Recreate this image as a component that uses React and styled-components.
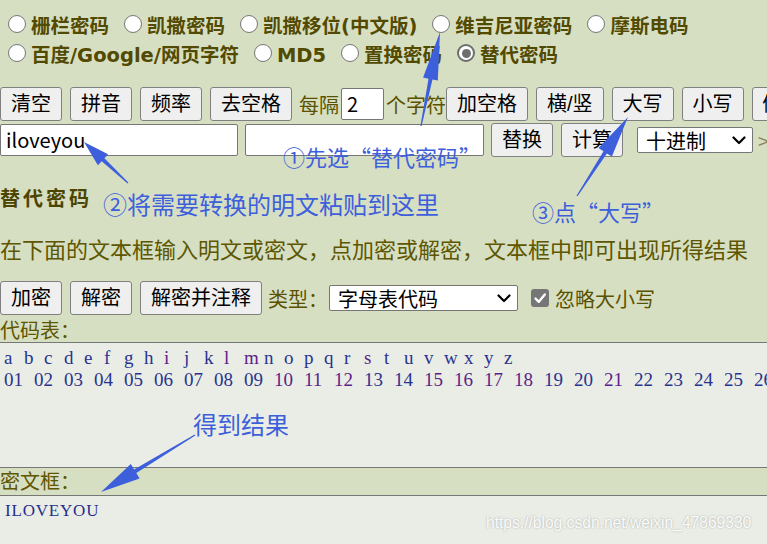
import React from "react";
import styled, { createGlobalStyle } from "styled-components";

const FONT = `"Noto Sans CJK SC", "Noto Sans", sans-serif`;
const OLIVE = "#5a5200";
const GREEN = "#d7dfc3";
const PALE = "#eaede6";
const BLUE = "#3d5fdb";

const GlobalStyle = createGlobalStyle`
  html, body { margin: 0; padding: 0; }
  body {
    width: 767px;
    height: 544px;
    overflow: hidden;
    background: ${PALE};
    font-family: ${FONT};
  }
`;

const Page = styled.div`
  position: relative;
  width: 767px;
  height: 544px;
  overflow: hidden;
  background: ${PALE};
`;

const TopPanel = styled.div`
  background: ${GREEN};
  height: 342px;
  box-sizing: border-box;
  padding-top: 12px;
  color: ${OLIVE};
  font-size: 20px;
`;

const RadioRow = styled.div`
  display: flex;
  align-items: center;
  height: 29px;
  padding-left: 8px;
  white-space: nowrap;
`;

const RadioItem = styled.label`
  display: flex;
  align-items: center;
  flex: none;
  margin-right: 15px;
  font-family: "DejaVu Sans", "Noto Sans CJK SC", sans-serif;
  font-weight: bold;
  font-size: 19.5px;
  line-height: 29px;
  color: #524a00;
`;

const RadioDot = styled.span`
  flex: none;
  width: 18px;
  height: 18px;
  box-sizing: border-box;
  border-radius: 50%;
  border: ${(p) => (p.$checked ? "2px solid #6e6e6e" : "1px solid #767676")};
  background: #fff;
  margin-right: 5px;
  margin-bottom: 5px;
  display: flex;
  align-items: center;
  justify-content: center;
  &::after {
    content: "";
    width: 9px;
    height: 9px;
    border-radius: 50%;
    background: ${(p) => (p.$checked ? "#6e6e6e" : "transparent")};
  }
`;

const Toolbar = styled.div`
  display: flex;
  align-items: center;
  height: 34px;
  margin-top: ${(p) => p.$mt}px;
  white-space: nowrap;
`;

const Button = styled.button`
  flex: none;
  height: 34px;
  box-sizing: border-box;
  padding: 0 10px;
  margin: 0 ${(p) => p.$mr ?? 8}px 0 0;
  background: #efefef;
  border: 1px solid #808080;
  border-radius: 3px;
  font-family: "Liberation Sans", "Noto Sans CJK SC", sans-serif;
  font-size: 20px;
  line-height: 1;
  color: #000;
`;

const TextInput = styled.div`
  flex: none;
  width: ${(p) => p.$w}px;
  height: 32px;
  box-sizing: border-box;
  margin-right: ${(p) => p.$mr ?? 0}px;
  padding: 0 5px;
  background: #fff;
  border: 1px solid #767676;
  border-radius: 2px;
  font-size: 20px;
  line-height: 30px;
  color: #000;
`;

const Label = styled.span`
  flex: none;
  margin-right: ${(p) => p.$mr ?? 0}px;
  font-size: 20px;
  color: ${(p) => p.$color || OLIVE};
`;

const Select = styled.div`
  flex: none;
  width: ${(p) => p.$w}px;
  height: 26px;
  box-sizing: border-box;
  margin-right: ${(p) => p.$mr ?? 0}px;
  padding: 0 6px 0 8px;
  display: flex;
  align-items: center;
  justify-content: space-between;
  background: #fff;
  border: 1px solid #767676;
  border-radius: 2px;
  font-size: 20px;
  color: #000;
`;

const Checkbox = styled.span`
  flex: none;
  width: 18px;
  height: 18px;
  margin-right: 6px;
  border-radius: 3px;
  background: #767676;
  display: flex;
  align-items: center;
  justify-content: center;
`;

const Title = styled.div`
  margin-top: 26px;
  line-height: 30px;
  font-size: 20px;
  font-weight: bold;
  letter-spacing: 3px;
  color: #4c4500;
`;

const Desc = styled.div`
  margin-top: 20px;
  line-height: 30px;
  font-size: 22px;
  color: #5e5600;
  white-space: nowrap;
`;

const TableLabel = styled.div`
  margin-top: 3px;
  line-height: 24px;
  font-size: 20px;
  color: #5e5600;
`;

const CodeBox = styled.div`
  height: 125px;
  box-sizing: border-box;
  border-top: 1px solid #777;
  padding: 4px 0 0 4px;
  font-family: "Liberation Serif", serif;
  font-size: 19px;
  overflow: hidden;
`;

const CodeRow = styled.div`
  display: flex;
  height: 22px;
  line-height: 22px;
  white-space: nowrap;
`;

const Cell = styled.span`
  flex: none;
  width: ${(p) => p.$w}px;
  color: ${(p) => (p.$purple ? "#5b1f88" : "#29338f")};
`;

const Strip = styled.div`
  height: 29px;
  box-sizing: border-box;
  border-top: 1px solid #777;
  border-bottom: 1px solid #777;
  background: ${GREEN};
  line-height: 26px;
  font-size: 20px;
  color: #5e5600;
`;

const Output = styled.div`
  padding: 4px 0 0 5px;
  line-height: 22px;
  font-family: "Liberation Serif", serif;
  font-size: 17px;
  letter-spacing: 0.8px;
  color: #282c8c;
`;

const Watermark = styled.div`
  position: absolute;
  left: 486px;
  top: 514px;
  font-family: "Liberation Sans", Arial, sans-serif;
  font-size: 15.6px;
  color: rgba(255, 255, 255, 0.95);
  text-shadow: 0 0 2px rgba(0, 0, 0, 0.3);
  white-space: nowrap;
`;

const Note = styled.div`
  position: absolute;
  left: ${(p) => p.$x}px;
  top: ${(p) => p.$y}px;
  font-size: ${(p) => p.$size}px;
  line-height: 1;
  color: ${BLUE};
  white-space: nowrap;
`;

const Overlay = styled.svg`
  position: absolute;
  left: 0;
  top: 0;
  width: 767px;
  height: 544px;
  pointer-events: none;
`;

function arrowPoints([x0, y0], [x1, y1], headLen, headHalf, tailHalf, neckHalf) {
  const dx = x1 - x0;
  const dy = y1 - y0;
  const len = Math.hypot(dx, dy);
  const ux = dx / len;
  const uy = dy / len;
  const nx = -uy;
  const ny = ux;
  const bx = x1 - ux * headLen;
  const by = y1 - uy * headLen;
  const pts = [
    [x0 + nx * tailHalf, y0 + ny * tailHalf],
    [bx + nx * neckHalf, by + ny * neckHalf],
    [bx + nx * headHalf, by + ny * headHalf],
    [x1, y1],
    [bx - nx * headHalf, by - ny * headHalf],
    [bx - nx * neckHalf, by - ny * neckHalf],
    [x0 - nx * tailHalf, y0 - ny * tailHalf],
  ];
  return pts.map((p) => p.map((v) => v.toFixed(1)).join(",")).join(" ");
}

const Chevron = () => (
  <svg width="14" height="9" viewBox="0 0 14 9">
    <polyline points="1.5,1.5 7,7 12.5,1.5" fill="none" stroke="#000" strokeWidth="2.2" strokeLinecap="round" strokeLinejoin="round" />
  </svg>
);

const row1 = [
  { t: "栅栏密码" },
  { t: "凯撒密码" },
  { t: "凯撒移位(中文版)" },
  { t: "维吉尼亚密码" },
  { t: "摩斯电码" },
];
const row2 = [
  { t: "百度/Google/网页字符" },
  { t: "MD5" },
  { t: "置换密码" },
  { t: "替代密码", c: true },
];

const letters = "abcdefghijklmnopqrstuvwxyz".split("");
const purpleLetters = new Set(["i", "l", "m", "s"]);
const numbers = Array.from({ length: 26 }, (_, i) => String(i + 1).padStart(2, "0"));
const purpleNums = new Set(["10", "11", "12", "15", "16", "17", "18", "21"]);

export default function App() {
  return (
    <Page>
      <GlobalStyle />
      <TopPanel>
        <RadioRow>
          {row1.map((r) => (
            <RadioItem key={r.t}>
              <RadioDot $checked={r.c} />
              {r.t}
            </RadioItem>
          ))}
        </RadioRow>
        <RadioRow>
          {row2.map((r) => (
            <RadioItem key={r.t}>
              <RadioDot $checked={r.c} />
              {r.t}
            </RadioItem>
          ))}
        </RadioRow>

        <Toolbar $mt={17}>
          <Button>清空</Button>
          <Button>拼音</Button>
          <Button>频率</Button>
          <Button $mr={7}>去空格</Button>
          <Label $mr={2}>每隔</Label>
          <TextInput $w={43} $mr={2}>2</TextInput>
          <Label>个字符</Label>
          <Button>加空格</Button>
          <Button>横/竖</Button>
          <Button>大写</Button>
          <Button>小写</Button>
          <Button>倒序</Button>
        </Toolbar>

        <Toolbar $mt={2}>
          <TextInput $w={238} $mr={7}>iloveyou</TextInput>
          <TextInput $w={239} $mr={7} />
          <Button>替换</Button>
          <Button $mr={14}>计算</Button>
          <Select $w={116} $mr={5}>
            十进制
            <Chevron />
          </Select>
          <Label $color="#8a8462">&gt;</Label>
        </Toolbar>

        <Title>替代密码</Title>
        <Desc>在下面的文本框输入明文或密文，点加密或解密，文本框中即可出现所得结果</Desc>

        <Toolbar $mt={18}>
          <Button>加密</Button>
          <Button>解密</Button>
          <Button $mr={6}>解密并注释</Button>
          <Label $mr={1}>类型：</Label>
          <Select $w={189} $mr={13}>
            字母表代码
            <Chevron />
          </Select>
          <Checkbox>
            <svg width="14" height="14" viewBox="0 0 14 14">
              <polyline points="2.5,7.5 5.8,10.8 11.8,3.5" fill="none" stroke="#fff" strokeWidth="2.4" strokeLinecap="round" strokeLinejoin="round" />
            </svg>
          </Checkbox>
          <Label>忽略大小写</Label>
        </Toolbar>

        <TableLabel>代码表：</TableLabel>
      </TopPanel>

      <CodeBox>
        <CodeRow>
          {letters.map((l) => (
            <Cell key={l} $w={20} $purple={purpleLetters.has(l)}>
              {l}
            </Cell>
          ))}
        </CodeRow>
        <CodeRow>
          {numbers.map((n) => (
            <Cell key={n} $w={30} $purple={purpleNums.has(n)}>
              {n}
            </Cell>
          ))}
        </CodeRow>
      </CodeBox>

      <Strip>密文框：</Strip>
      <Output>ILOVEYOU</Output>

      <Watermark>https://blog.csdn.net/weixin_47869330</Watermark>

      <Note $x={283} $y={145} $size={22}>①先选“替代密码”</Note>
      <Note $x={103} $y={192} $size={24}>②将需要转换的明文粘贴到这里</Note>
      <Note $x={532} $y={200} $size={22}>③点“大写”</Note>
      <Note $x={193} $y={412} $size={24}>得到结果</Note>

      <Overlay viewBox="0 0 767 544">
        <polygon fill={BLUE} points={arrowPoints([421, 126], [440, 32], 48, 7.5, 0.6, 2)} />
        <polygon fill={BLUE} points={arrowPoints([128, 183], [84, 142], 26, 7.5, 0.6, 2)} />
        <polygon fill={BLUE} points={arrowPoints([577, 196], [628, 117], 42, 8, 0.6, 2)} />
        <polygon fill={BLUE} points={arrowPoints([195, 435], [101, 492], 40, 8.5, 0.6, 2.2)} />
      </Overlay>
    </Page>
  );
}
